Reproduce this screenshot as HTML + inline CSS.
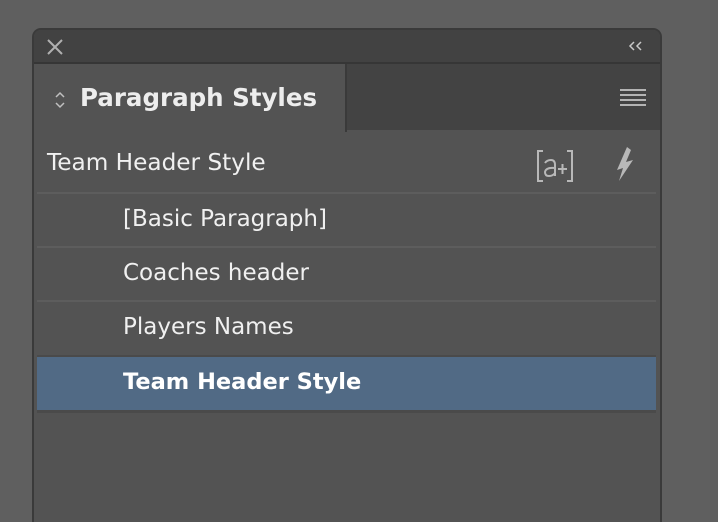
<!DOCTYPE html>
<html><head><style>
html,body{margin:0;width:718px;height:522px;overflow:hidden;}
body{background:#5f5f5f;position:relative;font-family:"DejaVu Sans","Liberation Sans",sans-serif;}
.panel{position:absolute;left:32px;top:28px;width:630px;height:494px;background:#535353;border:2px solid #3a3a3a;border-bottom:none;border-radius:9px 9px 0 0;box-sizing:border-box;overflow:hidden;}
.title{position:absolute;left:0;top:0;right:0;height:32px;background:#424242;border-bottom:2px solid #363636;}
.tabbar{position:absolute;left:0;top:34px;right:0;height:66px;background:#434343;}
.tab{position:absolute;left:0;top:0;width:311px;height:68px;background:#535353;border-right:2px solid #3a3a3a;}
.tabt{position:absolute;left:46px;top:19px;font-size:24.5px;font-weight:bold;color:#ededed;}
.hdr{position:absolute;left:13px;top:119px;font-size:23.2px;color:#f0f0f0;}
.row{position:absolute;left:3px;width:619px;height:52px;border-top:2px solid #5d5d5d;background:#535353;}
.row span{position:absolute;left:86px;top:12px;font-size:23px;color:#f0f0f0;}
.sel{background:#516a85;border-top:2px solid #4a4a4a;}
.sel span{font-weight:bold;color:#fff;font-size:22.5px;top:12px;}
</style></head><body>
<div class="panel">
 <div class="title">
  <svg style="position:absolute;left:12px;top:8px" width="18" height="18"><path d="M2 2L16 16M16 2L2 16" stroke="#b0b0b0" stroke-width="2"/></svg>
  <svg style="position:absolute;left:594px;top:10px" width="16" height="12"><path d="M6 2L2 6L6 10M13 2L9 6L13 10" stroke="#c8c8c8" stroke-width="1.5" fill="none"/></svg>
 </div>
 <div class="tabbar">
  <div class="tab">
   <svg style="position:absolute;left:20px;top:26px" width="12" height="20"><path d="M2 7L6 3L10 7M2 13L6 17L10 13" stroke="#c0c0c0" stroke-width="1.5" fill="none"/></svg>
   <div class="tabt">Paragraph Styles</div>
  </div>
  <svg style="position:absolute;left:586px;top:25px" width="26" height="18"><path d="M0 1H26M0 6H26M0 11H26M0 16H26" stroke="#b4b4b4" stroke-width="2"/></svg>
 </div>
 <svg style="position:absolute;left:500px;top:118px" width="46" height="36" fill="none" stroke="#b8b8b8" stroke-width="2">
  <path d="M9 3H4V33H9"/><path d="M33 3H38V33H33"/>
  <path d="M11 15Q13 12 17 12Q21 12 21 17V28M21 20Q12 19 11 24Q11 28 15 28Q19 28 21 25"/>
  <path d="M24 21H33M28.5 16V26"/>
 </svg>
 <div class="hdr">Team Header Style</div>
 <svg style="position:absolute;left:578px;top:113px" width="26" height="40"><path d="M15 4L5 27L11 25L7 38L21 17L14 19L19 7Z" fill="#b8b8b8"/></svg>
 <div class="row" style="top:162px"><span>[Basic Paragraph]</span></div>
 <div class="row" style="top:216px"><span>Coaches header</span></div>
 <div class="row" style="top:270px"><span>Players Names</span></div>
 <div class="row sel" style="top:325px;height:54px"><span>Team Header Style</span></div>
 <div style="position:absolute;left:3px;top:380px;width:619px;height:3px;background:#4a4a4a"></div>
</div>
</body></html>
